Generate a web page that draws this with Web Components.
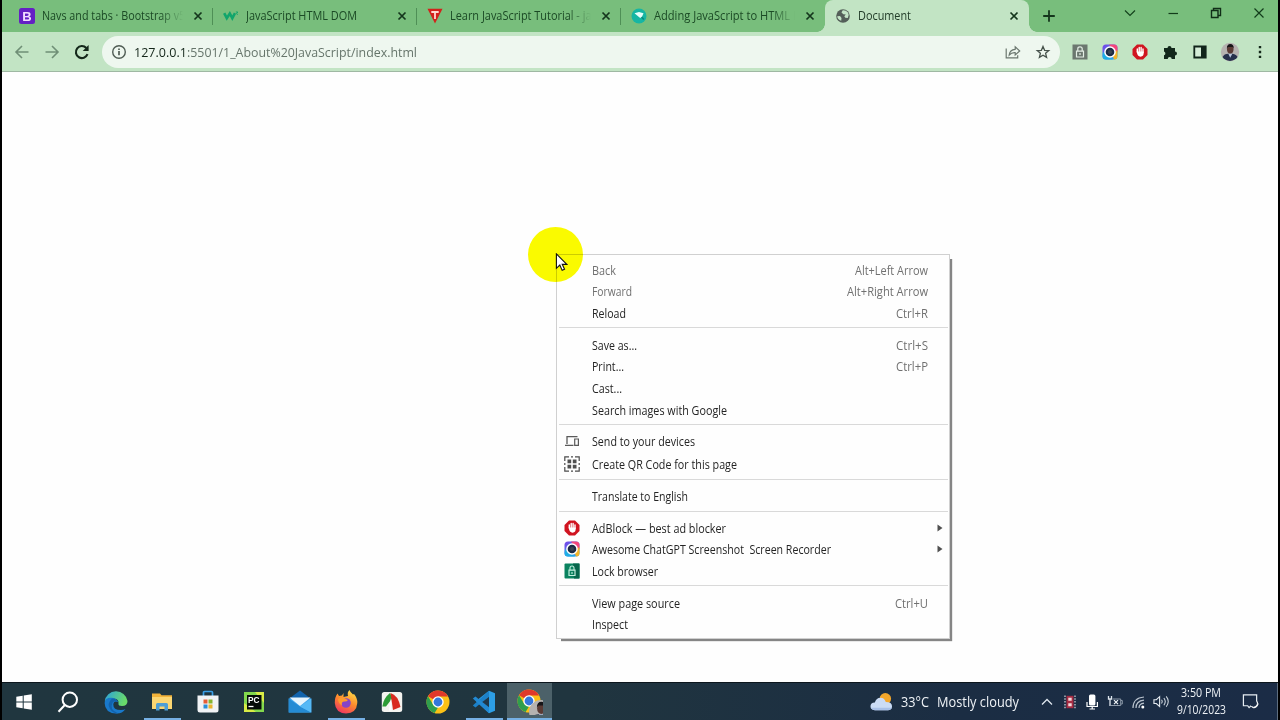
<!DOCTYPE html>
<html lang="en">
<head>
<meta charset="utf-8">
<title>Document</title>
<style>
  html, body {
    margin: 0;
    height: 100%;
    overflow: hidden;
    background: #000;
  }
</style>
</head>
<body>
<desktop-screen>
  <browser-window slot="window">
    <tab-strip slot="tabs">
      <browser-tab icon="bootstrap" faded><fit-text width="146">Navs and tabs · Bootstrap v5.</fit-text></browser-tab>
      <browser-tab icon="w3"><fit-text width="111">JavaScript HTML DOM</fit-text></browser-tab>
      <browser-tab icon="tpoint" faded><fit-text width="147">Learn JavaScript Tutorial - jav</fit-text></browser-tab>
      <browser-tab icon="codecademy" faded><fit-text width="147">Adding JavaScript to HTML D</fit-text></browser-tab>
      <browser-tab icon="globe" active><fit-text width="53">Document</fit-text></browser-tab>
    </tab-strip>
    <tool-bar slot="toolbar">
      <fit-text width="53" style="color:#14261a">127.0.0.1</fit-text><fit-text width="230">:5501/1_About%20JavaScript/index.html</fit-text>
    </tool-bar>
  </browser-window>

  <context-menu slot="overlay">
    <menu-row disabled><fit-text width="24">Back</fit-text><fit-text slot="keys" width="73">Alt+Left Arrow</fit-text></menu-row>
    <menu-row disabled><fit-text width="40">Forward</fit-text><fit-text slot="keys" width="81">Alt+Right Arrow</fit-text></menu-row>
    <menu-row><fit-text width="34">Reload</fit-text><fit-text slot="keys" width="32">Ctrl+R</fit-text></menu-row>
    <menu-line></menu-line>
    <menu-row><fit-text width="45">Save as...</fit-text><fit-text slot="keys" width="32">Ctrl+S</fit-text></menu-row>
    <menu-row><fit-text width="32">Print...</fit-text><fit-text slot="keys" width="32">Ctrl+P</fit-text></menu-row>
    <menu-row><fit-text width="30">Cast...</fit-text></menu-row>
    <menu-row><fit-text width="135">Search images with Google</fit-text></menu-row>
    <menu-line></menu-line>
    <menu-row icon="devices"><fit-text width="103">Send to your devices</fit-text></menu-row>
    <menu-row icon="qr" tall><fit-text width="145">Create QR Code for this page</fit-text></menu-row>
    <menu-line></menu-line>
    <menu-row><fit-text width="96">Translate to English</fit-text></menu-row>
    <menu-line></menu-line>
    <menu-row icon="adblock" submenu><fit-text width="134">AdBlock — best ad blocker</fit-text></menu-row>
    <menu-row icon="recorder" submenu><fit-text width="239">Awesome ChatGPT Screenshot&nbsp; Screen Recorder</fit-text></menu-row>
    <menu-row icon="lockGreen"><fit-text width="66">Lock browser</fit-text></menu-row>
    <menu-line></menu-line>
    <menu-row><fit-text width="88">View page source</fit-text><fit-text slot="keys" width="33">Ctrl+U</fit-text></menu-row>
    <menu-row><fit-text width="36">Inspect</fit-text></menu-row>
  </context-menu>
  <mouse-pointer slot="overlay"></mouse-pointer>

  <task-bar slot="taskbar">
    <task-button icon="windows" size="16" style="width:44px"></task-button>
    <task-button icon="search" size="22" style="width:44px;margin-right:3px"></task-button>
    <task-button icon="edge" size="24"></task-button>
    <task-button icon="explorer" size="22" running></task-button>
    <task-button icon="store" size="24"></task-button>
    <task-button icon="pycharm" size="22"></task-button>
    <task-button icon="mail" size="24"></task-button>
    <task-button icon="firefox" size="24" running></task-button>
    <task-button icon="cutter" size="22"></task-button>
    <task-button icon="chrome" size="24"></task-button>
    <task-button icon="vscode" size="24" running></task-button>
    <task-button icon="chromeUser" size="26" active></task-button>
    <system-tray slot="tray"></system-tray>
  </task-bar>
</desktop-screen>

<script>
(function() {
  const chromeLogo = `
    <circle cx="12" cy="12" r="11.5" fill="#fbc116"/>
    <path d="M12 12 2 6.3A11.5 11.5 0 0 1 22 6.5H12z" fill="#e0392b"/>
    <path d="M2 6.3 7.3 15l4.7 2.5-3.4 5.6A11.5 11.5 0 0 1 2 6.3z" fill="#2f9e4d"/>
    <circle cx="12" cy="12" r="5.7" fill="#fff"/><circle cx="12" cy="12" r="4.4" fill="#3477dc"/>`;
  const portrait = `
    <circle cx="12" cy="12" r="11" fill="#b5b2b0"/>
    <path d="M3 18q2-4 7-4h5q5 1 6 4a11 11 0 0 1-18 0z" fill="#26304c"/>
    <path d="m10 14 2.300 5 2.500-5z" fill="#b9c6dc"/>
    <ellipse cx="12.300" cy="8.800" rx="3.900" ry="5" fill="#5b3b35"/>
    <path d="M8.200 8q0-5.500 4.200-5.500T16.500 8l-1-2h-6z" fill="#171518"/>`;

  // name: [viewBox, markup]
  const ICONS = {
    bootstrap: ['0 0 16 16', '<rect width="16" height="16" rx="2.5" fill="#6420c4"/><text x="8" y="12.600" font-family="Liberation Sans" font-weight="bold" font-size="13" text-anchor="middle" fill="#f2dcff">B</text>'],
    w3: ['0 0 16 16', '<path d="m1.200 5.200 2.600 5L6.800 5.500l2.500 4.700 2.700-5" fill="none" stroke="#12a56c" stroke-width="2.600"/><path d="M12.800 4h2l-1.300 1.800 1.200.8" fill="none" stroke="#12a56c"/>'],
    tpoint: ['0 0 16 16', '<path d="M.5.800h15L8 15.500z" fill="#d2221b"/><path d="M4.300 4h7.400M8 4v7" stroke="#ffd9ce" stroke-width="1.800"/>'],
    codecademy: ['0 0 16 16', '<circle cx="8" cy="8" r="7.500" fill="#16b6a3"/><path d="M3.500 5.200 8 4l4.500 1.200L10.500 10l-2-.500z" fill="#e7fffb"/><path d="m10.500 9 2.300 2.500" stroke="#08897e" stroke-width="1.500"/>'],
    globe: ['0 0 16 16', '<circle cx="8" cy="8" r="6.800" fill="#545f59"/><path d="M2.200 8.200 5 8l1.500 2-.3 2.800Q2.500 11.500 2.200 8.200zM7.500 2.400l-1 2 1.800 1.800 2.500.300L9.300 8.300l1 1.500 2.500.300q1.800-3 .2-5.500Q10.700 2 7.500 2.400z" fill="#c3e4c6"/>'],
    close: ['0 0 10 10', '<path d="m1.500 1.500 7 7m0-7-7 7" stroke="#14361c" stroke-width="1.700"/>'],
    plus: ['0 0 14 14', '<path d="M7 1.200v11.600M1.200 7h11.600" stroke="#14361c" stroke-width="1.800"/>'],
    down: ['0 0 12 12', '<path d="m1 3.500 5 5 5-5" fill="none" stroke="#14421c" stroke-width="1.200"/>'],
    minimize: ['0 0 12 12', '<path d="M1.500 6.500h9.500" stroke="#123b1a" stroke-width="1.200"/>'],
    restore: ['0 0 12 12', '<path d="M1.500 3.500h6.500v7H1.500zM3.500 3.500v-2h7v7H8" fill="none" stroke="#102d17" stroke-width="1.400"/>'],
    closeWin: ['0 0 12 12', '<path d="m1.500 1.500 9 9m0-9-9 9" stroke="#123b1a" stroke-width="1.200"/>'],
    back: ['0 0 16 16', '<path d="M14.500 8H2M8 2 2 8l6 6" fill="none" stroke="#6f8f76" stroke-width="1.600"/>'],
    forward: ['0 0 16 16', '<path d="M1.500 8H14M8 2l6 6-6 6" fill="none" stroke="#6f8f76" stroke-width="1.600"/>'],
    reload: ['0 0 16 16', '<path d="M13.500 10.200A6 6 0 1 1 12.300 4" fill="none" stroke="#14281a" stroke-width="2.100"/><path d="M14.600 1v6H8.700z" fill="#14281a"/>'],
    info: ['0 0 16 16', '<circle cx="8" cy="8" r="6.300" fill="none" stroke="#4f5c54" stroke-width="1.400"/><path d="M8 7v4.300M8 4.400V6" stroke="#4f5c54" stroke-width="1.700"/>'],
    share: ['0 0 16 16', '<path d="M1.200 4.500v9.300h11.500v-2.600M4.200 11q.5-5.400 6-5.700V2.800L14.700 7l-4.500 4V8.700Q6.500 8.400 4.200 11z" fill="none" stroke="#6b776f" stroke-width="1.200"/>'],
    star: ['0 0 16 16', '<path d="m8 2.400 1.600 3.900 4.200.300-3.200 2.700 1 4.100L8 11.200l-3.600 2.200 1-4.100-3.200-2.700 4.200-.300z" fill="none" stroke="#46524b" stroke-width="1.300"/>'],
    lockGrey: ['0 0 16 16', '<path d="M.5.500h15v15H.5z" fill="#6b776f"/><path d="M4.500 7.200h7v5.800h-7z" fill="none" stroke="#e3eee5" stroke-width="1.200"/><path d="M5.800 7V4.800q0-2 2.200-2t2.200 2V7M8 9v2" fill="none" stroke="#e3eee5" stroke-width="1.200"/>'],
    lockGreen: ['0 0 16 16', '<rect x=".5" y=".5" width="15" height="15" rx="1" fill="#0b8360"/><path d="M9 .5h6.500v15H10z" fill="#07664c"/><path d="M5 7.200h6v5.300H5z" fill="none" stroke="#c3f0df" stroke-width="1.200"/><path d="M6 7V5q0-2 2-2t2 2v2M8 9v2" fill="none" stroke="#c3f0df" stroke-width="1.100"/>'],
    recorder: ['0 0 16 16', `
      <defs><linearGradient id="g" x1="0" y1="0" x2="1" y2="1"><stop offset="0" stop-color="#7b3fe8"/><stop offset="1" stop-color="#20b8f0"/></linearGradient></defs>
      <rect x=".5" y=".5" width="15" height="15" rx="3.500" fill="url(#g)"/>
      <path d="M7 .5h5q3.500 0 3.500 3.500v4L12 8z" fill="#f4467c"/><path d="M15.500 6v6q0 3.500-3.500 3.500L10 10z" fill="#f4b52b"/>
      <path d="M1 8l5 4 5 3.500H4Q.5 15.500.5 12z" fill="#20aee6"/>
      <circle cx="8" cy="8" r="5.800" fill="#fff"/><circle cx="8" cy="8" r="4.300" fill="#1d2b44"/><circle cx="8" cy="8" r="2" fill="#3a4550"/>`],
    adblock: ['0 0 16 16', '<path d="M5 .5h6L15.500 5v6L11 15.500H5L.5 11V5z" fill="#d01420"/><path d="M5.300 8V5M7.200 8V3.500M9.100 8V3.500M11 8.500V5" stroke="#fff" stroke-width="1.400" stroke-linecap="round"/><path d="M4.600 7.500h7.100q.3 5.200-3.200 5.200-3 0-3.900-5.200z" fill="#fff"/>'],
    puzzle: ['0 0 16 16', '<path d="M2 4h3.500a2 2 0 1 1 4 0H13v3.500a2 2 0 1 1 0 4V15H9.700a2 2 0 0 0-4 0H2v-3.700a2 2 0 0 0 0-3.800z" fill="#11271a"/>'],
    panel: ['0 0 16 16', '<path d="M2.300 2.500h11.400v11H2.300z" fill="#d4ecd7" stroke="#10241a" stroke-width="1.800"/><path d="M9 2h5v12H9z" fill="#10241a"/>'],
    portrait: ['0 0 24 24', portrait],
    dots: ['0 0 16 16', '<path d="M8 1.900v2.400M8 6.800v2.400M8 11.700v2.400" stroke="#14281a" stroke-width="2.400"/>'],
    devices: ['0 0 16 16', '<path d="M3 11V3.700h10.500M1 12.300h8.500" fill="none" stroke="#5a5a5a" stroke-width="1.300"/><path d="M10.700 6h3.700v6.300h-3.700z" fill="none" stroke="#5a5a5a" stroke-width="1.200"/>'],
    qr: ['0 0 16 16', '<path d="M.8 5V.8H5M11 .8h4.200V5M15.200 11v4.200H11M5 15.200H.8V11M.8 7v2M15.200 7v2M7 .8h2M7 15.200h2" fill="none" stroke="#4c4c4c" stroke-width="1.200"/><path d="M3.500 3.500h3.700v3.700H3.500zM8.800 3.500h3.700v3.700H8.800zM3.500 8.800h3.700v3.700H3.500zM8.800 8.800h3.700v3.700H8.800z" fill="#505050"/>'],
    submenu: ['0 0 8 8', '<path d="m1.500.500 5 3.500-5 3.500z" fill="#505050"/>'],
    windows: ['0 0 16 16', '<path d="M.3 2.700 6.700 1.700v5.800H.3zM7.700 1.500 15.800.300v7.200H7.700zM.3 8.500h6.400v5.800L.3 13.300zM7.700 8.500h8.100v7.200l-8.100-1.200z" fill="#fff"/>'],
    search: ['0 0 22 22', '<circle cx="12.800" cy="8.700" r="7.200" fill="none" stroke="#fff" stroke-width="2"/><path d="m7.800 14-6.300 6.700" stroke="#fff" stroke-width="2"/>'],
    edge: ['0 0 24 24', `
      <defs><linearGradient id="a" x1="0" x2="1" y2=".3"><stop offset="0" stop-color="#2aa0e0"/><stop offset="1" stop-color="#6adb69"/></linearGradient></defs>
      <path d="M.7 11.500A11.500 11.500 0 0 1 23.500 11q0 5-5.500 5-4 0-3.500-2.500Q15 9 10 8.500 4 8 .7 11.500z" fill="url(#a)"/>
      <path d="M.6 13Q1 7.800 7 7.800q5.500.2 7 4.200-4.300-1.500-4.700 2.500-.2 5.500 7.700 5.500 3 0 4.500-1-3.500 5-9.500 4.500Q1 23 .6 13z" fill="#1979cb"/>
      <path d="M8 8.600Q2.500 14 6 19t8 4.300Q5 20 8.600 12.500q2-2 5.400-.5-1.500-3-6-3.400z" fill="#1262ad"/>`],
    explorer: ['0 0 22 22', '<path d="M1 2.500h8l1.500 1.700H21V18H1z" fill="#f2b33a"/><path d="M1 6h20v12H1z" fill="#fbd672"/><path d="M5 19.500v-6Q5 12 6.500 12h9q1.500 0 1.500 1.500v6h-3.500v-4h-5v4z" fill="#4e9ed4"/>'],
    store: ['0 0 24 24', '<path d="M7.500 6V2.500q0-1 1-1h7q1 0 1 1V6" fill="none" stroke="#3aa0e8" stroke-width="1.700"/><path d="M1.500 5.500h21V20q0 2.500-2.500 2.500H4Q1.500 22.500 1.500 20z" fill="#f1f3f5"/><path d="M7.500 9.500h4v4h-4z" fill="#e65c35"/><path d="M12.500 9.500h4v4h-4z" fill="#84b52e"/><path d="M7.500 14.500h4v4h-4z" fill="#2b8ed8"/><path d="M12.500 14.500h4v4h-4z" fill="#e9b52e"/>'],
    pycharm: ['0 0 22 22', '<path d="M1 1h20v20H1z" fill="#83d84d"/><path d="M12 1h9v11zM1 12v9h12z" fill="#d9ec46"/><path d="M4 4h14.500v14.500H4z" fill="#050b07"/><text x="5" y="12" font-family="Liberation Sans" font-weight="bold" font-size="8.300" fill="#fff">PC</text><path d="M5.500 15.500h5" stroke="#fff" stroke-width="1.300"/>'],
    mail: ['0 0 24 24', '<path d="M.7 9 12 .5 23.300 9z" fill="#1264ad"/><path d="M.7 8.500h22.600V22.500H.7z" fill="#45a8ed"/><path d="M1.500 7.500h21L12 16z" fill="#e7f5fd"/><path d="m.7 8.500 11.300 8 11.300 6H.7z" fill="#248bd4"/><path d="m23.300 8.500-11.300 8 11.300 6z" fill="#55b9f6"/>'],
    firefox: ['0 0 24 24', `
      <defs><linearGradient id="f" x1=".8" y1="0" x2=".3" y2="1"><stop offset="0" stop-color="#ffe24a"/><stop offset=".5" stop-color="#ff8b2c"/><stop offset="1" stop-color="#ee3561"/></linearGradient></defs>
      <path d="M3.500 3.500 5 6l3-.5L9.500 3v4L14 6q-1-4 1.500-6 .5 2 3.500 4.500L20 4q3.500 4 3.300 9Q22.500 23.300 12 23.500 1.500 23 .8 13 .7 7 3.500 3.500z" fill="url(#f)"/>
      <circle cx="12" cy="13" r="4.800" fill="#8544c9"/><path d="M4 9q4-3 8 0l2 1q-1.500 2-4 1.500-3 .5-2 4Q4 13 4 9z" fill="#ff9b2f"/>`],
    cutter: ['0 0 22 22', '<rect x=".8" y="1" width="20.400" height="20" rx="2.500" fill="#f3f3ef"/><path d="m9 2 2.500 5L5 15.500H1.300Q2.500 7 9 2z" fill="#2c9b35"/><path d="M9.500 2Q17 4 19.500 16L12 19z" fill="#d92b20"/><path d="m9.700 7 1 12.500H8z" fill="#fff"/>'],
    chrome: ['0 0 24 24', chromeLogo],
    chromeUser: ['0 0 26 26', chromeLogo + '<svg x="11" y="10" width="15" height="15" viewBox="0 0 24 24">' + portrait + '</svg>'],
    vscode: ['0 0 24 24', '<path d="m17 .700 6 2.500v17.600l-6 2.500L4 11z" fill="#2d9fe6"/><path d="M17 .700v5.700L3.500 17.500.8 15.500z" fill="#1c80c8"/><path d="M17 23.300v-5.700L3.500 6.500.8 8.500z" fill="#2289d3"/><path d="M17 6.700v10.600L10.200 12z" fill="#20384a"/>'],
    weather: ['0 0 24 20', '<circle cx="16" cy="7" r="6" fill="#f3a72b"/><path d="M5 19q-4.500 0-4.500-4T5 11q1.500-5 6-5 4 0 5.500 4.500 6.500 0 6.500 4.500 0 4-4 4z" fill="#cbdcf5"/><path d="M1 16.500h22Q22 19 19 19H5q-3 0-4-2.500z" fill="#a9c1e8"/>'],
    trayUp: ['0 0 12 12', '<path d="m1 8.500 5-5 5 5" fill="none" stroke="#dfe6ee" stroke-width="1.300"/>'],
    film: ['0 0 14 14', '<path d="M3.500.800h7v12.400h-7z" fill="#a62c43"/><path d="M5.300 2.800h3.400v3H5.300zM5.300 8.300h3.400v3H5.300z" fill="#f3d9db"/><path d="M2 .5v13M12 .5v13" stroke="#d8d8dc" stroke-width="1.200" stroke-dasharray="1.500 1.300"/>'],
    mic: ['0 0 14 16', '<rect x="4" y=".5" width="6.400" height="11" rx="1.500" fill="#fff"/><path d="M2 8v4.500h10.400V8M7.200 12v3M4.500 15h5.500" fill="none" stroke="#fff" stroke-width="1.200"/>'],
    battery: ['0 0 16 14', '<path d="M5.500 4h8.200v6.500H4M13.800 5.500h1.500V9h-1.500" fill="none" stroke="#8c99a8"/><path d="M1.500 1v3h3V1M3 4v7" fill="none" stroke="#dfe6ee" stroke-width="1.300"/><path d="m7 5.200 4 4m0-4-4 4" stroke="#eef2f6" stroke-width="1.200"/>'],
    wifi: ['0 0 14 14', '<path d="M2 13Q2 3 13 2M5 13Q5 6 13 5.200M8 13q0-4.300 5-4.800" fill="none" stroke="#b9c3ce" stroke-width="1.200"/><circle cx="11.800" cy="12" r="1.500" fill="#fff"/>'],
    speaker: ['0 0 18 14', '<path d="M1 5h2.500L7 1.800v10.400L3.500 9H1z" fill="none" stroke="#e3e9ef" stroke-width="1.200"/><path d="M9 5q1.500 2 0 4M11.500 3.200q3 3.800 0 7.600M14 1.500q4.300 5.500 0 11" fill="none" stroke="#d1d9e2" stroke-width="1.100"/>'],
    notice: ['0 0 18 18', '<path d="M15.500 9V2H1.500v11.500H6l1.500 2 2-2" fill="none" stroke="#e7edf3" stroke-width="1.300"/><path d="M15.800 8.800a4.200 4.200 0 0 1-6 5.500 3.600 3.600 0 1 0 6-5.500z" fill="#fff" stroke="#fff" stroke-width=".8"/>'],
    cursor: ['0 0 14 20', '<path d="M1.500 1v15.500l3.700-3.500 2.500 5.700 2.600-1.200-2.500-5.300h4.900z" fill="#fff" stroke="#111" stroke-width="1.200"/>']
  };

  const FONT = '"Open Sans", "Noto Sans", "Liberation Sans", sans-serif';

  // Registers an element whose shadow root is cloned from the given markup.
  function component(tag, html, setup) {
    const template = document.createElement('template');
    template.innerHTML = html;
    customElements.define(tag, class extends HTMLElement {
      constructor() {
        super();
        this.attachShadow({ mode: 'open' });
        this.shadowRoot.appendChild(template.content.cloneNode(true));
      }

      connectedCallback() {
        if (setup) setup(this, this.shadowRoot);
      }
    });
  }

  component('ui-icon', `
    <style>
      :host { display: block; flex: none; }
      svg { display: block; width: 100%; height: 100%; }
    </style>
    <svg></svg>
  `, (el, root) => {
    const [box, markup] = ICONS[el.getAttribute('name')];
    const svg = root.querySelector('svg');
    const size = el.getAttribute('size') || 16;
    const [, , w, h] = box.split(' ').map(Number);
    svg.setAttribute('viewBox', box);
    svg.innerHTML = markup;
    el.style.width = size + 'px';
    el.style.height = size * h / w + 'px';
  });

  component('desktop-screen', `
    <style>
      :host {
        display: flex;
        flex-direction: column;
        box-sizing: border-box;
        width: 1280px;
        height: 720px;
        padding: 0 2px;
        background: #000;
        font: 12px/16px ${FONT};
        overflow: hidden;
      }
    </style>
    <slot name="window"></slot>
    <slot name="taskbar"></slot>
    <slot name="overlay"></slot>
  `);

  component('browser-window', `
    <style>
      :host { display: flex; flex-direction: column; flex: 1; min-height: 0; }
      main { flex: 1; background: #fefefe; }
    </style>
    <slot name="tabs"></slot>
    <slot name="toolbar"></slot>
    <main></main>
  `);

  component('tab-strip', `
    <style>
      :host {
        display: flex;
        align-items: stretch;
        height: 32px;
        padding-left: 7px;
        background: #78be7c;
      }
      .new { align-self: center; margin-left: 13px; }
      .controls { display: flex; margin: 7px 13px 0 auto; gap: 31px; }
    </style>
    <slot></slot>
    <ui-icon class="new" name="plus" size="14"></ui-icon>
    <div class="controls">
      <ui-icon name="down" size="12"></ui-icon>
      <ui-icon name="minimize" size="12"></ui-icon>
      <ui-icon name="restore" size="12"></ui-icon>
      <ui-icon name="closeWin" size="12"></ui-icon>
    </div>
  `);

  component('browser-tab', `
    <style>
      :host {
        display: flex;
        align-items: center;
        box-sizing: border-box;
        width: 204px;
        padding: 0 10px 0 10px;
        position: relative;
        color: #1b4a25;
      }
      .label { width: 142px; margin: 0 9px 0 7px; overflow: hidden; }
      :host([faded]) .label {
        -webkit-mask-image: linear-gradient(90deg, #000 118px, transparent 141px);
        mask-image: linear-gradient(90deg, #000 118px, transparent 141px);
      }
      :host([active]) {
        background: #c2e4c4;
        color: #223c29;
        border-radius: 8px 8px 0 0;
      }
      /* divider between inactive tabs */
      :host(:not([active]))::after {
        content: "";
        position: absolute;
        right: 0;
        top: 8px;
        width: 1px;
        height: 17px;
        background: #4f8f56;
      }
      :host(:nth-child(4))::after { display: none; }
      /* curved feet of the active tab */
      .foot { display: none; position: absolute; bottom: 0; width: 8px; height: 8px; }
      :host([active]) .foot { display: block; }
      .left { left: -8px; background: radial-gradient(circle at 0 0, transparent 7.5px, #c2e4c4 8px); }
      .right { right: -8px; background: radial-gradient(circle at 100% 0, transparent 7.5px, #c2e4c4 8px); }
    </style>
    <i class="foot left"></i>
    <div class="icon"></div>
    <div class="label"><slot></slot></div>
    <ui-icon name="close" size="10"></ui-icon>
    <i class="foot right"></i>
  `, (el, root) => {
    root.querySelector('.icon').innerHTML = `<ui-icon name="${el.getAttribute('icon')}"></ui-icon>`;
  });

  component('tool-bar', `
    <style>
      :host {
        display: flex;
        align-items: center;
        box-sizing: border-box;
        height: 40px;
        padding: 0 10px 0 12px;
        background: #c2e4c4;
        border-bottom: 1px solid #9fb8a3;
      }
      .nav { display: flex; gap: 14px; margin-right: 12px; }
      .address {
        display: flex;
        align-items: center;
        box-sizing: border-box;
        width: 958px;
        height: 32px;
        padding: 0 9px;
        border-radius: 16px;
        background: #eef7ef;
        color: #66756b;
        font-size: 13px;
      }
      .url { display: flex; flex: 1; margin-left: 7px; }
      .url + ui-icon { margin-right: 14px; }
      .extensions { display: flex; align-items: center; gap: 14px; margin-left: 12px; }
      .avatar { margin: 0 -2px; }
    </style>
    <div class="nav">
      <ui-icon name="back"></ui-icon>
      <ui-icon name="forward"></ui-icon>
      <ui-icon name="reload"></ui-icon>
    </div>
    <div class="address">
      <ui-icon name="info"></ui-icon>
      <div class="url"><slot></slot></div>
      <ui-icon name="share"></ui-icon>
      <ui-icon name="star"></ui-icon>
    </div>
    <div class="extensions">
      <ui-icon name="lockGrey"></ui-icon>
      <ui-icon name="recorder"></ui-icon>
      <ui-icon name="adblock"></ui-icon>
      <ui-icon name="puzzle"></ui-icon>
      <ui-icon name="panel"></ui-icon>
      <ui-icon class="avatar" name="portrait" size="20"></ui-icon>
      <ui-icon name="dots"></ui-icon>
    </div>
  `);

  component('context-menu', `
    <style>
      :host {
        display: block;
        position: absolute;
        left: 556px;
        top: 254px;
        box-sizing: border-box;
        width: 394px;
        height: 385px;
        padding: 4px 0 0;
        background: #fefefe;
        border: 1px solid #d0d0d0;
        box-shadow: 2px 2px 1px #858585;
        clip-path: polygon(0 0, 394px 0, 394px 5px, 398px 5px, 398px 390px, 5px 390px, 5px 385px, 0 385px);
        color: #242424;
      }
    </style>
    <slot></slot>
  `);

  component('menu-row', `
    <style>
      :host {
        display: flex;
        align-items: center;
        height: 21.6px;
        padding: 0 5px 0 7px;
      }
      :host([tall]) { height: 23px; }
      :host([disabled]) { color: #707070; }
      .icon { width: 16px; height: 16px; margin-right: 12px; }
      .label { flex: 1; padding-top: 2px; }
      .keys { color: #707070; margin-right: 8px; padding-top: 2px; }
      .arrow { width: 8px; height: 8px; }
    </style>
    <div class="icon"></div>
    <div class="label"><slot></slot></div>
    <div class="keys"><slot name="keys"></slot></div>
    <div class="arrow"></div>
  `, (el, root) => {
    if (el.hasAttribute('icon'))
      root.querySelector('.icon').innerHTML = `<ui-icon name="${el.getAttribute('icon')}"></ui-icon>`;
    if (el.hasAttribute('submenu'))
      root.querySelector('.arrow').innerHTML = '<ui-icon name="submenu" size="8"></ui-icon>';
  });

  component('menu-line', `
    <style>
      :host { display: flex; align-items: flex-start; box-sizing: border-box; height: 10.2px; padding: 3.6px 1px 0 2px; }
      div { flex: 1; height: 1px; background: #d9d9d9; }
    </style>
    <div></div>
  `);

  component('mouse-pointer', `
    <style>
      :host {
        position: absolute;
        left: 528px;
        top: 227px;
        display: block;
        width: 55px;
        height: 55px;
        border-radius: 50%;
        background: #fbfb00;
        mix-blend-mode: multiply;
      }
      ui-icon { position: absolute; left: 27px; top: 26px; }
    </style>
    <ui-icon name="cursor" size="13"></ui-icon>
  `);

  component('task-bar', `
    <style>
      :host {
        display: flex;
        box-sizing: border-box;
        height: 38px;
        border-top: 1px solid #0c161d;
        background: linear-gradient(90deg, #20363f 0%, #20353f 45%, #1b2d43 75%, #1b2c46 100%);
      }
      .tray { display: flex; margin-left: auto; }
    </style>
    <slot></slot>
    <div class="tray"><slot name="tray"></slot></div>
  `);

  component('task-button', `
    <style>
      :host {
        display: flex;
        align-items: center;
        justify-content: center;
        box-sizing: border-box;
        width: 46px;
        position: relative;
      }
      :host([active]) { background: #4c6169; width: 45px; }
      :host([running])::after, :host([active])::after {
        content: "";
        position: absolute;
        left: 5px;
        right: 4px;
        bottom: 0;
        height: 2px;
        background: #76b0e4;
      }
      :host([active])::after { left: 0; right: 0; }
    </style>
    <div></div>
  `, (el, root) => {
    root.querySelector('div').innerHTML = `<ui-icon name="${el.getAttribute('icon')}" size="${el.getAttribute('size')}"></ui-icon>`;
  });

  // Single line of text, condensed or stretched to span the given width.
  component('fit-text', `
    <style>
      :host { display: block; white-space: nowrap; }
      span { display: block; width: max-content; transform-origin: 0 50%; }
    </style>
    <span><slot></slot></span>
  `, (el, root) => {
    const span = root.querySelector('span');
    const target = Number(el.getAttribute('width'));
    const natural = span.getBoundingClientRect().width;
    el.style.width = target + 'px';
    if (natural) span.style.transform = `scaleX(${target / natural})`;
  });

  component('system-tray', `
    <style>
      :host { display: flex; align-items: center; color: #eef2f6; }
      .weather { display: flex; align-items: center; gap: 8px; margin-right: 22px; font-size: 14px; }
      .icons { display: flex; align-items: center; }
      .icons ui-icon { margin-right: 8px; }
      .clock { display: flex; flex-direction: column; align-items: center; width: 50px; line-height: 17px; padding-bottom: 2px; }
      .notice { margin: 0 18px 0 16px; }
      .peek { width: 1px; align-self: stretch; background: #5e6e80; }
    </style>
    <div class="weather">
      <ui-icon name="weather" size="23"></ui-icon>
      <fit-text width="28">33°C</fit-text>
      <fit-text width="82">Mostly cloudy</fit-text>
    </div>
    <div class="icons">
      <ui-icon name="trayUp" size="12" style="margin-right:10px"></ui-icon>
      <ui-icon name="film" size="14"></ui-icon>
      <ui-icon name="mic" size="14"></ui-icon>
      <ui-icon name="battery" size="16"></ui-icon>
      <ui-icon name="wifi" size="14"></ui-icon>
      <ui-icon name="speaker" size="17" style="margin-right:6px"></ui-icon>
    </div>
    <div class="clock">
      <fit-text width="40">3:50 PM</fit-text>
      <fit-text width="49">9/10/2023</fit-text>
    </div>
    <ui-icon class="notice" name="notice" size="17"></ui-icon>
    <div class="peek"></div>
  `);
})();
</script>
</body>
</html>
